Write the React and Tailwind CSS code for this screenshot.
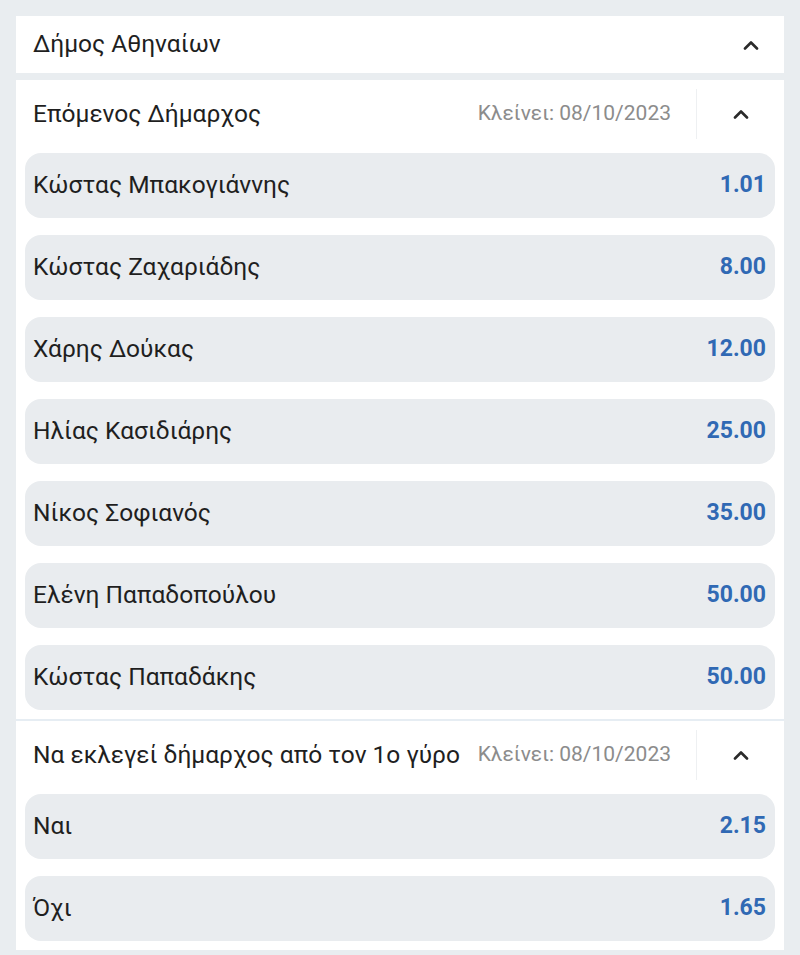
import React from "react";

const markets = [
  {
    title: "Επόμενος Δήμαρχος",
    closes: "Κλείνει: 08/10/2023",
    outcomes: [
      ["Κώστας Μπακογιάννης", "1.01"],
      ["Κώστας Ζαχαριάδης", "8.00"],
      ["Χάρης Δούκας", "12.00"],
      ["Ηλίας Κασιδιάρης", "25.00"],
      ["Νίκος Σοφιανός", "35.00"],
      ["Ελένη Παπαδοπούλου", "50.00"],
      ["Κώστας Παπαδάκης", "50.00"],
    ],
  },
  {
    title: "Να εκλεγεί δήμαρχος από τον 1ο γύρο",
    closes: "Κλείνει: 08/10/2023",
    outcomes: [
      ["Ναι", "2.15"],
      ["Όχι", "1.65"],
    ],
  },
];

function Chevron() {
  return (
    <svg width="16" height="10" viewBox="0 0 16 10" fill="none">
      <path d="M2 8.5 L8 2.5 L14 8.5" stroke="#2a2a2a" strokeWidth="2.6" strokeLinecap="round" strokeLinejoin="round" />
    </svg>
  );
}

function Market({ market, last }) {
  return (
    <div className={"bg-white " + (last ? "pb-[9px]" : "pb-[9px] border-b-2 border-[#e6edf3]")}>
      <div className="flex items-center h-[73px] pl-[17px] pb-[5px]">
        <div className="flex-1 text-[24.5px] text-[#1f1f1f] whitespace-nowrap">{market.title}</div>
        <div className="text-[21px] text-[#8c8c8c] pl-3 pr-[25px] whitespace-nowrap">{market.closes}</div>
        <div className="w-[88px] h-[50px] border-l border-[#eef0f2] flex items-center justify-center">
          <Chevron />
        </div>
      </div>
      <div className="flex flex-col gap-[17px] px-[9px]">
        {market.outcomes.map(([name, odd]) => (
          <div key={name} className="h-[65px] rounded-[16px] bg-[#e9ecef] flex items-center justify-between pl-[8px] pr-[9px]">
            <span className="text-[24.5px] text-[#1f1f1f]">{name}</span>
            <span className="text-[23px] font-bold text-[#3069b4]">{odd}</span>
          </div>
        ))}
      </div>
    </div>
  );
}

export default function App() {
  return (
    <div className="min-h-[955px] bg-[#e9edf0] pt-4 px-4 font-['Roboto',sans-serif]">
      <div className="bg-white h-[57px] flex items-center justify-between pl-[17px] pr-[25px]">
        <span className="text-[24.5px] text-[#1f1f1f]">Δήμος Αθηναίων</span>
        <Chevron />
      </div>
      <div className="mt-[7px]">
        {markets.map((m, i) => (
          <Market key={m.title} market={m} last={i === markets.length - 1} />
        ))}
      </div>
    </div>
  );
}
